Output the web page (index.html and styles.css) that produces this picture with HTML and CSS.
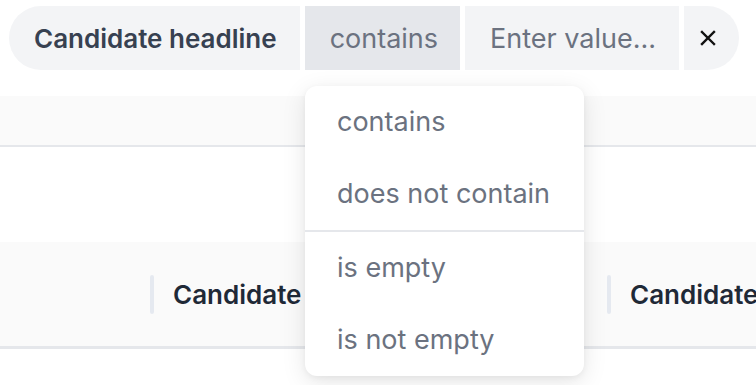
FILE: index.html
```html
<!DOCTYPE html>
<html>
<head>
<meta charset="utf-8">
<link rel="stylesheet" href="styles.css">
</head>
<body>
<div class="page">
  <div class="toolbar">
    <div class="filter">
      <div class="seg seg-field">Candidate headline</div>
      <div class="seg seg-op">contains</div>
      <div class="seg seg-value">Enter value...</div>
      <div class="seg seg-close">
        <svg width="16" height="16" viewBox="0 0 16 16"><path d="M2 2 L14 14 M14 2 L2 14" stroke="#111" stroke-width="2.4" stroke-linecap="square" fill="none"/></svg>
      </div>
    </div>
  </div>
  <div class="band"></div>
  <div class="gap-row"></div>
  <div class="thead">
    <div class="th th-first"></div>
    <div class="th"><span class="sep"></span><span class="th-label">Candidate</span></div>
    <div class="th"><span class="sep"></span><span class="th-label">Candidate</span></div>
  </div>

  <div class="menu">
    <div class="menu-group">
      <div class="menu-item">contains</div>
      <div class="menu-item">does not contain</div>
    </div>
    <div class="menu-group menu-group-split">
      <div class="menu-item">is empty</div>
      <div class="menu-item">is not empty</div>
    </div>
  </div>
</div>
</body>
</html>
```

FILE: styles.css
```css
* { box-sizing: border-box; }
html, body {
  margin: 0;
  padding: 0;
  background: #ffffff;
  font-family: Inter, "Noto Sans", "Liberation Sans", sans-serif;
  overflow: hidden;
}
.page {
  position: relative;
  width: 756px;
  height: 385px;
  overflow: hidden;
}
.toolbar {
  height: 96px;
  padding: 6px 0 0 9px;
}
.filter {
  display: flex;
  gap: 5px;
  height: 64px;
}
.seg {
  display: flex;
  align-items: center;
  height: 64px;
  padding: 0 23px 0 25px;
  font-size: 27px;
  background: #f3f4f6;
  color: #6b7280;
  white-space: nowrap;
}
.seg-field {
  border-radius: 32px 0 0 32px;
  font-size: 26px;
  font-weight: 600;
  color: #374151;
}
.seg-op {
  background: #e5e7eb;
  padding-right: 22px;
}
.seg-close {
  width: 55px;
  padding: 0 0 0 16px;
  border-radius: 0 32px 32px 0;
}
.band {
  height: 51px;
  background: #fafafa;
  border-bottom: 2px solid #e5e7eb;
}
.gap-row {
  height: 95px;
}
.thead {
  display: flex;
  height: 107px;
  background: #fafafa;
  border-bottom: 3px solid #e5e7eb;
}
.th {
  display: flex;
  align-items: center;
  width: 457px;
  flex-shrink: 0;
}
.th-first {
  width: 150px;
}
.sep {
  width: 4px;
  height: 39px;
  border-radius: 2px;
  background: #e5e9f0;
  margin-right: 19px;
}
.th-label {
  font-size: 26px;
  font-weight: 600;
  color: #1f2937;
  white-space: nowrap;
}
.menu {
  position: absolute;
  top: 86px;
  left: 305px;
  width: 279px;
  background: #ffffff;
  border-radius: 12px;
  box-shadow: 0 6px 24px rgba(0, 0, 0, 0.10), 0 2px 6px rgba(0, 0, 0, 0.05);
  overflow: hidden;
}
.menu-group-split {
  border-top: 2px solid #e5e7eb;
}
.menu-item {
  height: 72px;
  line-height: 72px;
  padding-left: 32px;
  font-size: 27px;
  color: #6b7280;
  white-space: nowrap;
}
```
